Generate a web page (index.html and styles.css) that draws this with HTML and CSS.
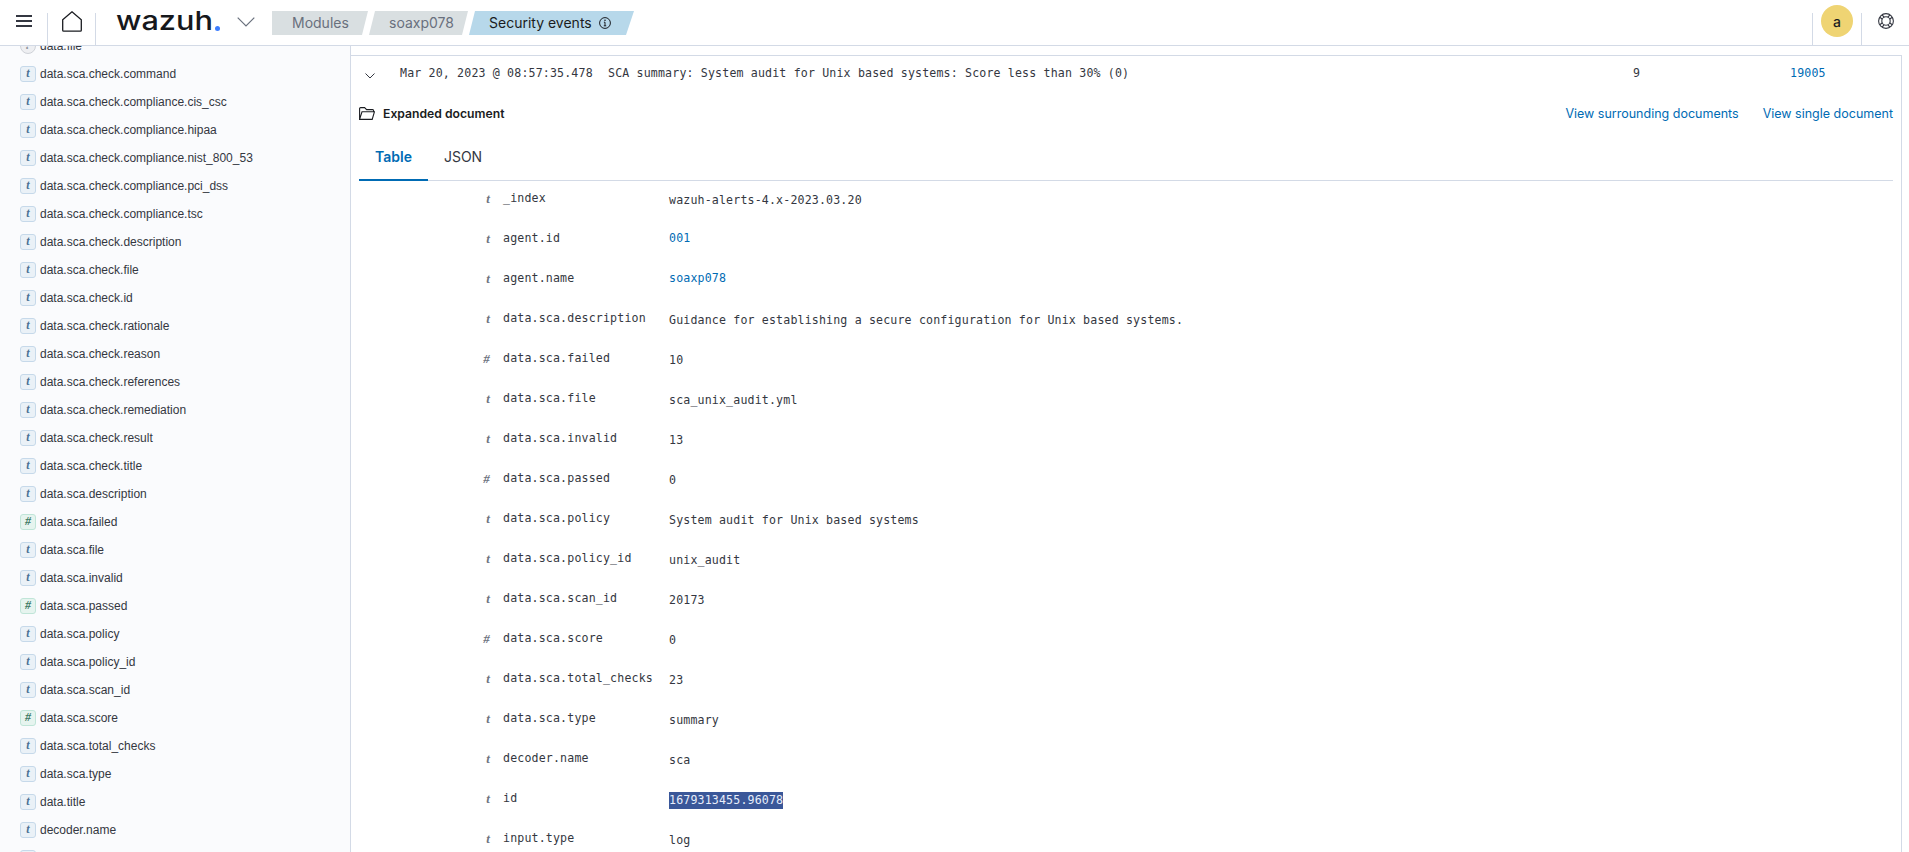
FILE: index.html
```html
<!DOCTYPE html>
<html lang="en">
<head>
<meta charset="utf-8">
<title>Security events - Wazuh</title>
<link rel="stylesheet" href="styles.css">
</head>
<body>
<header class="topbar">
  <div class="cell cell-menu">
    <svg class="ic-menu" viewBox="0 0 16 12" width="16" height="12"><path d="M0 1h16M0 6h16M0 11h16" stroke="#343741" stroke-width="1.8" fill="none"/></svg>
  </div>
  <div class="cell cell-home">
    <svg viewBox="0 0 20 21" width="20" height="21"><path d="M.7 8.8 10 .8l9.3 8v10.4a1 1 0 0 1-1 1H1.7a1 1 0 0 1-1-1z" stroke="#1a1c21" stroke-width="1.3" fill="none"/></svg>
  </div>
  <div class="logo"><span class="logo-word">wazuh</span><span class="logo-dot"></span></div>
  <svg class="ic-chev" viewBox="0 0 18 10" width="18" height="10"><path d="M.7.7 9 9l8.3-8.3" stroke="#69707d" stroke-width="1.2" fill="none"/></svg>
  <nav class="crumbs">
    <span class="crumb crumb-first">Modules</span>
    <span class="crumb crumb-mid">soaxp078</span>
    <span class="crumb crumb-active">Security events
      <svg viewBox="0 0 12 12" width="12" height="12"><circle cx="6" cy="6" r="5.4" stroke="#1a1c21" fill="none"/><path d="M6 5.2v3.6M4.8 8.8h2.4M4.9 5.2H6" stroke="#1a1c21" fill="none"/><circle cx="6" cy="3.2" r=".8" fill="#1a1c21"/></svg>
    </span>
  </nav>
  <div class="top-right">
    <div class="cell cell-avatar"><span class="avatar">a</span></div>
    <div class="cell cell-help">
      <svg viewBox="0 0 16 16" width="16" height="16"><g fill="none" stroke="#343741" stroke-width="1.1"><circle cx="8" cy="8" r="7.4"/><circle cx="8" cy="8" r="4.2"/><path d="M4.2 1.8l2 2.6M11.8 1.8l-2 2.6M1.8 4.2l2.6 2M14.2 4.2l-2.6 2M1.8 11.8l2.6-2M14.2 11.8l-2.6-2M4.2 14.2l2-2.6M11.8 14.2l-2-2.6"/></g></svg>
    </div>
  </div>
</header>

<div class="page">
  <aside class="sidebar">
    <ul class="fields">
      <li class="field"><span class="tok tok-geo">?</span>data.file</li>
      <li class="field"><span class="tok">t</span>data.sca.check.command</li>
      <li class="field"><span class="tok">t</span>data.sca.check.compliance.cis_csc</li>
      <li class="field"><span class="tok">t</span>data.sca.check.compliance.hipaa</li>
      <li class="field"><span class="tok">t</span>data.sca.check.compliance.nist_800_53</li>
      <li class="field"><span class="tok">t</span>data.sca.check.compliance.pci_dss</li>
      <li class="field"><span class="tok">t</span>data.sca.check.compliance.tsc</li>
      <li class="field"><span class="tok">t</span>data.sca.check.description</li>
      <li class="field"><span class="tok">t</span>data.sca.check.file</li>
      <li class="field"><span class="tok">t</span>data.sca.check.id</li>
      <li class="field"><span class="tok">t</span>data.sca.check.rationale</li>
      <li class="field"><span class="tok">t</span>data.sca.check.reason</li>
      <li class="field"><span class="tok">t</span>data.sca.check.references</li>
      <li class="field"><span class="tok">t</span>data.sca.check.remediation</li>
      <li class="field"><span class="tok">t</span>data.sca.check.result</li>
      <li class="field"><span class="tok">t</span>data.sca.check.title</li>
      <li class="field"><span class="tok">t</span>data.sca.description</li>
      <li class="field"><span class="tok tok-num">#</span>data.sca.failed</li>
      <li class="field"><span class="tok">t</span>data.sca.file</li>
      <li class="field"><span class="tok">t</span>data.sca.invalid</li>
      <li class="field"><span class="tok tok-num">#</span>data.sca.passed</li>
      <li class="field"><span class="tok">t</span>data.sca.policy</li>
      <li class="field"><span class="tok">t</span>data.sca.policy_id</li>
      <li class="field"><span class="tok">t</span>data.sca.scan_id</li>
      <li class="field"><span class="tok tok-num">#</span>data.sca.score</li>
      <li class="field"><span class="tok">t</span>data.sca.total_checks</li>
      <li class="field"><span class="tok">t</span>data.sca.type</li>
      <li class="field"><span class="tok">t</span>data.title</li>
      <li class="field"><span class="tok">t</span>decoder.name</li>
      <li class="field"><span class="tok">t</span>id</li>
    </ul>
  </aside>

  <main class="main">
    <div class="panel">
      <div class="event-row">
        <svg class="ic-toggle" viewBox="0 0 10 6" width="10" height="6"><path d="M.5.5 5 5 9.5.5" stroke="#343741" fill="none"/></svg>
        <span class="event-time">Mar 20, 2023 @ 08:57:35.478</span>
        <span class="event-desc">SCA summary: System audit for Unix based systems: Score less than 30% (0)</span>
        <span class="event-level">9</span>
        <span class="event-rule">19005</span>
      </div>
      <div class="doc-head">
        <svg viewBox="0 0 16 13" width="16" height="13"><path d="M.6 12.4V1.6a1 1 0 0 1 1-1h4l2 2h6a1 1 0 0 1 1 1v1.2M.6 12.4h12.6l2.2-7.6H3z" stroke="#1a1c21" fill="none" stroke-width="1.1"/></svg>
        <span class="doc-title">Expanded document</span>
        <a class="doc-link doc-link-first">View surrounding documents</a>
        <a class="doc-link">View single document</a>
      </div>
      <div class="tabs">
        <span class="tab tab-active">Table</span>
        <span class="tab">JSON</span>
      </div>
      <div class="doc-table">
        <div class="doc-row"><i class="type">t</i><span class="key">_index</span><span class="val">wazuh-alerts-4.x-2023.03.20</span></div>
        <div class="doc-row"><i class="type">t</i><span class="key">agent.id</span><span class="val val-link">001</span></div>
        <div class="doc-row"><i class="type">t</i><span class="key">agent.name</span><span class="val val-link">soaxp078</span></div>
        <div class="doc-row"><i class="type">t</i><span class="key">data.sca.description</span><span class="val">Guidance for establishing a secure configuration for Unix based systems.</span></div>
        <div class="doc-row"><i class="type">#</i><span class="key">data.sca.failed</span><span class="val">10</span></div>
        <div class="doc-row"><i class="type">t</i><span class="key">data.sca.file</span><span class="val">sca_unix_audit.yml</span></div>
        <div class="doc-row"><i class="type">t</i><span class="key">data.sca.invalid</span><span class="val">13</span></div>
        <div class="doc-row"><i class="type">#</i><span class="key">data.sca.passed</span><span class="val">0</span></div>
        <div class="doc-row"><i class="type">t</i><span class="key">data.sca.policy</span><span class="val">System audit for Unix based systems</span></div>
        <div class="doc-row"><i class="type">t</i><span class="key">data.sca.policy_id</span><span class="val">unix_audit</span></div>
        <div class="doc-row"><i class="type">t</i><span class="key">data.sca.scan_id</span><span class="val">20173</span></div>
        <div class="doc-row"><i class="type">#</i><span class="key">data.sca.score</span><span class="val">0</span></div>
        <div class="doc-row"><i class="type">t</i><span class="key">data.sca.total_checks</span><span class="val">23</span></div>
        <div class="doc-row"><i class="type">t</i><span class="key">data.sca.type</span><span class="val">summary</span></div>
        <div class="doc-row"><i class="type">t</i><span class="key">decoder.name</span><span class="val">sca</span></div>
        <div class="doc-row"><i class="type">t</i><span class="key">id</span><span class="val"><span class="picked">1679313455.96078</span></span></div>
        <div class="doc-row"><i class="type">t</i><span class="key">input.type</span><span class="val">log</span></div>
      </div>
    </div>
  </main>
</div>
</body>
</html>
```
FILE: styles.css
```css
* { box-sizing: border-box; }
html, body { margin: 0; height: 100%; overflow: hidden; }
body { width: 1909px; height: 852px; background: #fff; font-family: Inter, "Noto Sans", sans-serif; color: #343741; display: flex; flex-direction: column; }

/* top bar */
.topbar { height: 46px; flex: none; display: flex; align-items: flex-start; border-bottom: 1px solid #d3dae6; background: #fff; }
.cell { height: 32px; margin-top: 13px; display: flex; justify-content: center; }
.cell-menu { width: 48px; border-right: 1px solid #d3dae6; padding-top: 2px; }
.ic-menu { display: block; margin-top: 0; }
.cell-home { width: 48px; border-right: 1px solid #d3dae6; margin-top: 13px; }
.cell-home svg { margin-top: -2px; }
.logo { margin-left: 20px; margin-top: 9px; width: 121px; height: 24px; display: flex; align-items: flex-end; }
.logo-word { width: 96px; font-family: Inter, sans-serif; font-size: 26px; line-height: 24px; font-weight: 500; color: #16181c; transform: scaleX(1.18); transform-origin: left center; }
.logo-dot { width: 5px; height: 5px; margin-left: 3px; margin-bottom: 2px; border-radius: 50%; background: #3d7eff; }
.ic-chev { margin-top: 17px; flex: none; }
.crumbs { display: flex; margin-left: 17px; margin-top: 11px; height: 24px; }
.crumb { height: 24px; display: flex; align-items: center; font-size: 14px; line-height: 24px; color: #69707d; background: #d9dfe1; }
.crumb-first { width: 96px; padding-left: 20px; clip-path: polygon(0 0, 100% 0, calc(100% - 6px) 100%, 0 100%); }
.crumb-mid { width: 99px; margin-left: 1px; padding-left: 20px; clip-path: polygon(6px 0, 100% 0, calc(100% - 6px) 100%, 0 100%); }
.crumb-active { width: 165px; margin-left: 1px; padding-left: 20px; color: #1a1c21; background: #b7d8ea; clip-path: polygon(6px 0, 100% 0, calc(100% - 8px) 100%, 0 100%); }
.crumb-active svg { margin-left: 7px; flex: none; }
.top-right { margin-left: auto; display: flex; }
.cell-avatar { width: 50px; border-left: 1px solid #d3dae6; border-right: 1px solid #d3dae6; margin-top: 13px; }
.avatar { width: 32px; height: 32px; margin-top: -8px; border-radius: 50%; background: #efd473; color: #1a1c21; font-size: 14px; font-weight: 500; display: flex; align-items: center; justify-content: center; }
.cell-help { width: 47px; padding-left: 0; }

/* body */
.page { flex: 1; min-height: 0; display: flex; }
.sidebar { width: 351px; flex: none; overflow: hidden; background: #fafbfd; border-right: 1px solid #d3dae6; }
.fields { list-style: none; margin: -14px 0 0; padding: 0 0 0 20px; }
.field { height: 28px; display: flex; align-items: center; gap: 4px; font-family: "Liberation Sans", Arial, sans-serif; font-size: 12px; color: #343741; white-space: nowrap; }
.tok { width: 16px; height: 16px; flex: none; border-radius: 3px; background: #eaf1f7; border: 1px solid #c6d9ea; color: #4a7194; font-family: "Liberation Serif", serif; font-style: italic; font-weight: 700; font-size: 12px; line-height: 13px; text-align: center; }
.tok-num { background: #e6f4ef; border-color: #c0e5d8; color: #3d7a64; }
.tok-geo { border-radius: 50%; background: #eeeff2; border-color: #cfd2d8; color: #8d929b; }

.main { flex: 1; min-width: 0; overflow: hidden; padding-right: 7px; }
.panel { margin-top: 9px; height: 100%; border-top: 1px solid #d3dae6; border-right: 1px solid #d3dae6; background: #fff; }

.event-row { height: 34px; display: grid; grid-template-columns: 49px 208px 1025px 157px 1fr; align-items: center; font-family: "DejaVu Sans Mono", monospace; font-size: 11.6px; letter-spacing: .16px; color: #343741; white-space: nowrap; }
.ic-toggle { margin: 6px 0 0 14px; }
.event-rule { color: #006bb4; }
.doc-head { height: 42px; margin: 2px 8px 0; display: flex; align-items: center; font-size: 12.2px; }
.doc-head svg { margin-right: 8px; flex: none; }
.doc-title { font-weight: 600; color: #1a1c21; }
.doc-link { color: #006bb4; font-size: 12.5px; }
.doc-link-first { margin-left: auto; margin-right: 24px; }
.tabs { margin: 0 8px; height: 47px; display: flex; border-bottom: 1px solid #d3dae6; }
.tab { padding: 0 16px; height: 47px; line-height: 46px; font-size: 14px; color: #343741; }
.tab-active { color: #006bb4; font-weight: 600; border-bottom: 2px solid #006bb4; }

.doc-table { margin-top: 1px; }
.doc-row { height: 40px; display: grid; grid-template-columns: 152px 166px 1fr; font-family: "DejaVu Sans Mono", monospace; font-size: 11.6px; letter-spacing: .16px; color: #343741; line-height: 17px; white-space: nowrap; }
.type { justify-self: end; margin-right: 13px; padding-top: 8px; font-family: "Liberation Serif", serif; font-weight: 700; font-size: 13px; color: #6e7480; }
.key { padding-top: 8px; }
.val { padding-top: 10px; }
.val-link { padding-top: 8px; color: #006bb4; }
.picked { display: inline-block; background: #3a5799; color: #e8eefb; }
```
